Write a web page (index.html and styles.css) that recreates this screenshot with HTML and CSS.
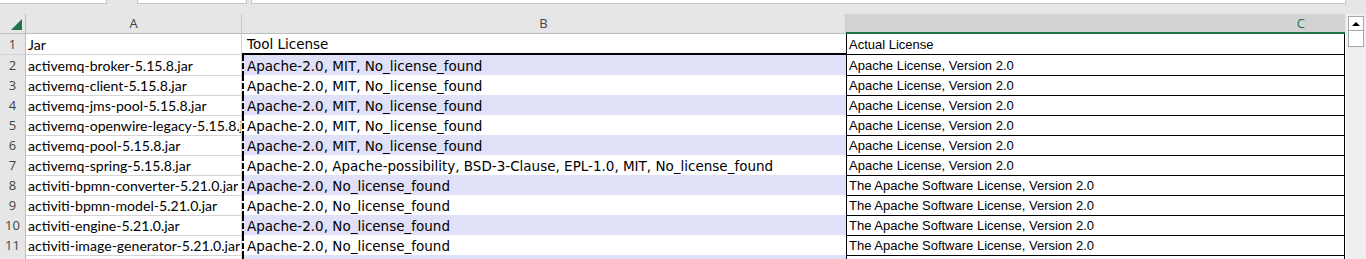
FILE: index.html
```html
<!DOCTYPE html>
<html lang="en">

<head>
    <meta charset="UTF-8">
    <meta name="viewport" content="width=device-width, initial-scale=1.0">
    <title>licenses.xlsx</title>
    <link rel="stylesheet" href="styles.css">
</head>

<body>
    <div class="app">
        <!-- bottom edge of the name box / formula bar -->
        <div class="bar-edge">
            <div class="namebox"></div>
            <div class="fx-box"></div>
            <div class="formula"></div>
        </div>

        <div class="sheet">
            <div class="grid">
                <div class="row head">
                    <div class="corner"><span class="select-all"></span></div>
                    <div class="colhead">A</div>
                    <div class="colhead">B</div>
                    <div class="colhead sel">C</div>
                </div>

                <div class="row first">
                    <div class="rowhead">1</div>
                    <div class="cell a">Jar</div>
                    <div class="cell b">Tool License</div>
                    <div class="cell c">Actual License</div>
                </div>
                <div class="row even">
                    <div class="rowhead">2</div>
                    <div class="cell a">activemq-broker-5.15.8.jar</div>
                    <div class="cell b">Apache-2.0, MIT, No_license_found</div>
                    <div class="cell c">Apache License, Version 2.0</div>
                </div>
                <div class="row">
                    <div class="rowhead">3</div>
                    <div class="cell a">activemq-client-5.15.8.jar</div>
                    <div class="cell b">Apache-2.0, MIT, No_license_found</div>
                    <div class="cell c">Apache License, Version 2.0</div>
                </div>
                <div class="row even">
                    <div class="rowhead">4</div>
                    <div class="cell a">activemq-jms-pool-5.15.8.jar</div>
                    <div class="cell b">Apache-2.0, MIT, No_license_found</div>
                    <div class="cell c">Apache License, Version 2.0</div>
                </div>
                <div class="row">
                    <div class="rowhead">5</div>
                    <div class="cell a">activemq-openwire-legacy-5.15.8.jar</div>
                    <div class="cell b">Apache-2.0, MIT, No_license_found</div>
                    <div class="cell c">Apache License, Version 2.0</div>
                </div>
                <div class="row even">
                    <div class="rowhead">6</div>
                    <div class="cell a">activemq-pool-5.15.8.jar</div>
                    <div class="cell b">Apache-2.0, MIT, No_license_found</div>
                    <div class="cell c">Apache License, Version 2.0</div>
                </div>
                <div class="row">
                    <div class="rowhead">7</div>
                    <div class="cell a">activemq-spring-5.15.8.jar</div>
                    <div class="cell b">Apache-2.0, Apache-possibility, BSD-3-Clause, EPL-1.0, MIT, No_license_found</div>
                    <div class="cell c">Apache License, Version 2.0</div>
                </div>
                <div class="row even">
                    <div class="rowhead">8</div>
                    <div class="cell a">activiti-bpmn-converter-5.21.0.jar</div>
                    <div class="cell b">Apache-2.0, No_license_found</div>
                    <div class="cell c">The Apache Software License, Version 2.0</div>
                </div>
                <div class="row">
                    <div class="rowhead">9</div>
                    <div class="cell a">activiti-bpmn-model-5.21.0.jar</div>
                    <div class="cell b">Apache-2.0, No_license_found</div>
                    <div class="cell c">The Apache Software License, Version 2.0</div>
                </div>
                <div class="row even">
                    <div class="rowhead">10</div>
                    <div class="cell a">activiti-engine-5.21.0.jar</div>
                    <div class="cell b">Apache-2.0, No_license_found</div>
                    <div class="cell c">The Apache Software License, Version 2.0</div>
                </div>
                <div class="row">
                    <div class="rowhead">11</div>
                    <div class="cell a">activiti-image-generator-5.21.0.jar</div>
                    <div class="cell b">Apache-2.0, No_license_found</div>
                    <div class="cell c">The Apache Software License, Version 2.0</div>
                </div>
                <div class="row even">
                    <div class="rowhead"></div>
                    <div class="cell a"></div>
                    <div class="cell b"></div>
                    <div class="cell c"></div>
                </div>
            </div>

            <div class="vscroll">
                <div class="scroll-btn"><span class="arrow-up"></span></div>
                <div class="scroll-thumb"></div>
            </div>
        </div>
    </div>
</body>

</html>
```

FILE: styles.css
```css
html {
    background-color: #e6e6e6;
}

body {
    margin: 0;
    font-family: "Open Sans", Arial, sans-serif;
}

.app {
    height: 259px;
    overflow: hidden;
    background-color: #e6e6e6;
}

/* top strip */
.bar-edge {
    height: 14px;
    display: flex;
    align-items: flex-start;
}

.bar-edge div {
    height: 3px;
    background-color: #fff;
    border: 1px solid #c6c6c6;
    border-top: none;
}

.namebox {
    width: 106px;
    margin-left: -1px;
}

.fx-box {
    width: 108px;
    margin-left: 30px;
}

.formula {
    width: 1093px;
    margin-left: 4px;
}

/* sheet */
.sheet {
    display: flex;
}

.grid {
    width: 1346px;
    background-color: #fff;
}

.row {
    display: grid;
    grid-template-columns: 26px 216px 604px 499px;
    height: 20px;
}

.row.first {
    height: 21px;
}

.row.head {
    background-color: #e6e6e6;
}

.corner {
    position: relative;
    border-right: 1px solid #bdbdbd;
    border-bottom: 1px solid #bdbdbd;
}

.select-all {
    position: absolute;
    right: 3px;
    bottom: 3px;
    width: 0;
    height: 0;
    border-left: 11px solid transparent;
    border-bottom: 11px solid #217346;
}

.colhead {
    font-size: 13px;
    color: #444;
    text-align: center;
    line-height: 19px;
    border-right: 1px solid #c8c8c8;
    border-bottom: 1px solid #bdbdbd;
}

.colhead.sel {
    background-color: #d2d2d2;
    color: #217346;
    text-align: right;
    padding-right: 40px;
    border-right: none;
    border-bottom: 2px solid #217346;
    line-height: 18px;
}

.rowhead {
    background-color: #e6e6e6;
    color: #444;
    font-size: 13px;
    text-align: center;
    line-height: 20px;
    border-right: 1px solid #bdbdbd;
    border-bottom: 1px solid #d4d4d4;
}

.cell {
    white-space: nowrap;
    overflow: hidden;
    display: flex;
    align-items: center;
    box-sizing: border-box;
    padding-top: 1px;
}

.cell.a {
    font-family: Lato, "Open Sans", sans-serif;
    font-size: 14.1px;
    color: #000;
    padding-left: 2px;
    border-right: 1px solid #d4d4d4;
    border-bottom: 1px solid #d4d4d4;
}

.cell.b {
    font-family: "DejaVu Sans", Verdana, sans-serif;
    font-size: 13.5px;
    color: #000;
    padding-left: 5px;
    background: repeating-linear-gradient(to bottom, #000 0 6px, transparent 6px 8px) left top / 2px 100% no-repeat, #fff;
}

.even .cell.b {
    background: repeating-linear-gradient(to bottom, #000 0 6px, transparent 6px 8px) left top / 2px 100% no-repeat, #e0e0f8;
}

.first .cell.b {
    background: #fff;
    border-bottom: 2px solid #000;
}

.cell.c {
    font-family: "Liberation Sans", Arial, sans-serif;
    font-size: 13px;
    color: #000;
    padding-left: 2px;
    border-left: 1px solid #000;
    border-right: 1px solid #000;
    border-bottom: 1px solid #000;
}

/* vertical scrollbar */
.vscroll {
    width: 20px;
    height: 245px;
    background-color: #efefef;
    padding: 2px 0 0 2px;
    box-sizing: border-box;
}

.scroll-btn,
.scroll-thumb {
    width: 14px;
    background-color: #fff;
    border: 1px solid #a6a6a6;
}

.scroll-btn {
    height: 13px;
    display: flex;
    align-items: center;
    justify-content: center;
}

.arrow-up {
    width: 0;
    height: 0;
    border-left: 4px solid transparent;
    border-right: 4px solid transparent;
    border-bottom: 4px solid #000;
}

.scroll-thumb {
    height: 15px;
    border-top: none;
}
```
